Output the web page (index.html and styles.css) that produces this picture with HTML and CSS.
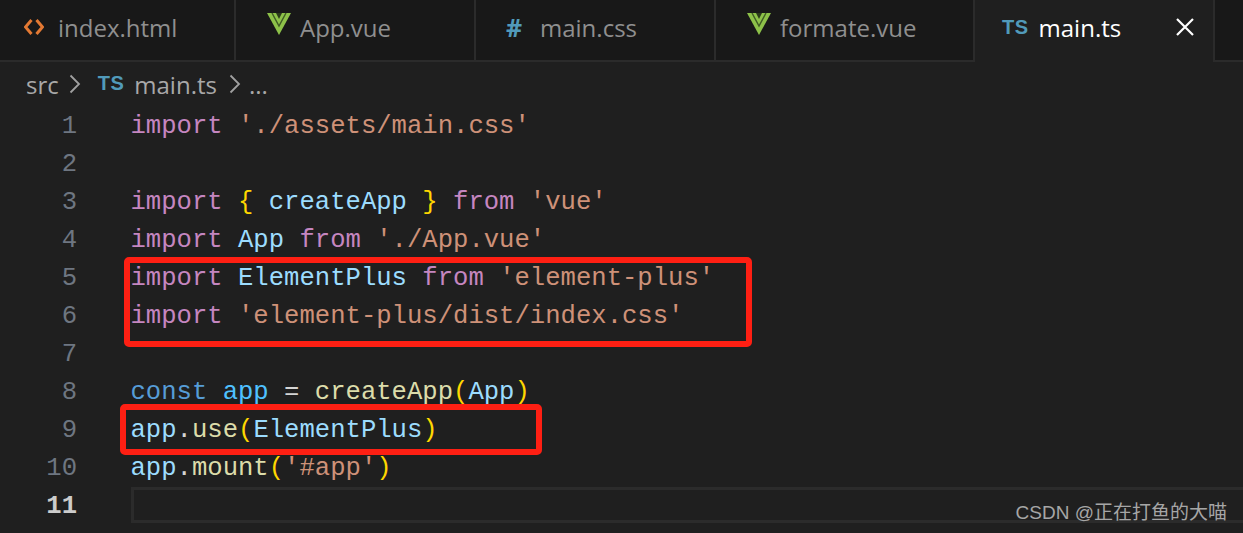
FILE: index.html
```html
<!DOCTYPE html>
<html lang="en">
<head>
<meta charset="utf-8">
<title>main.ts</title>
<link rel="stylesheet" href="styles.css">
</head>
<body>
<div class="window">
  <div class="tabs">
    <div class="tab tab-html">
      <svg class="icon-code" viewBox="0 0 20 20"><path d="M7.500 3 1.500 10l6 7M12.500 3l6 7-6 7" fill="none" stroke="#e37933" stroke-width="3"/></svg>
      <span class="tab-label">index.html</span>
    </div>
    <div class="tab tab-vue">
      <svg class="icon-vue" viewBox="0 0 24 22"><path d="M0 0h24L12 22z" fill="#8dc149"/><path d="M5 0l7 13L19 0" fill="none" stroke="#3f5a24" stroke-width="1.400"/><path d="M9 0h6l-3 6z" fill="#2a3a1a"/></svg>
      <span class="tab-label">App.vue</span>
    </div>
    <div class="tab tab-css">
      <span class="icon-hash">#</span>
      <span class="tab-label">main.css</span>
    </div>
    <div class="tab tab-vue tab-wide">
      <svg class="icon-vue" viewBox="0 0 24 22"><path d="M0 0h24L12 22z" fill="#8dc149"/><path d="M5 0l7 13L19 0" fill="none" stroke="#3f5a24" stroke-width="1.400"/><path d="M9 0h6l-3 6z" fill="#2a3a1a"/></svg>
      <span class="tab-label">formate.vue</span>
    </div>
    <div class="tab tab-active">
      <span class="icon-ts">TS</span>
      <span class="tab-label">main.ts</span>
      <svg class="icon-close" viewBox="0 0 20 20"><path d="M2 2l16 16M18 2 2 18" fill="none" stroke="#fff" stroke-width="2.2"/></svg>
    </div>
    <div class="tabs-rest"></div>
  </div>
  <div class="crumbs">
    <span>src</span>
    <svg class="crumb-sep" viewBox="0 0 12 20"><path d="M1.500 1.500 10 10l-8.500 8.500" fill="none" stroke="#a0a0a0" stroke-width="1.800"/></svg>
    <span class="icon-ts crumb-ts">TS</span>
    <span>main.ts</span>
    <svg class="crumb-sep crumb-sep-last" viewBox="0 0 12 20"><path d="M1.500 1.500 10 10l-8.500 8.500" fill="none" stroke="#a0a0a0" stroke-width="1.800"/></svg>
    <span>...</span>
  </div>
  <div class="code">
    <div class="line"><span class="num">1</span><code><i class="kw">import</i> <i class="str">'./assets/main.css'</i></code></div>
    <div class="line"><span class="num">2</span><code></code></div>
    <div class="line"><span class="num">3</span><code><i class="kw">import</i> <i class="br">{</i> <i class="var">createApp</i> <i class="br">}</i> <i class="kw">from</i> <i class="str">'vue'</i></code></div>
    <div class="line"><span class="num">4</span><code><i class="kw">import</i> <i class="var">App</i> <i class="kw">from</i> <i class="str">'./App.vue'</i></code></div>
    <div class="line"><span class="num">5</span><code><i class="kw">import</i> <i class="var">ElementPlus</i> <i class="kw">from</i> <i class="str">'element-plus'</i></code></div>
    <div class="line"><span class="num">6</span><code><i class="kw">import</i> <i class="str">'element-plus/dist/index.css'</i></code></div>
    <div class="line"><span class="num">7</span><code></code></div>
    <div class="line"><span class="num">8</span><code><i class="decl">const</i> <i class="cst">app</i> <i class="plain">=</i> <i class="fn">createApp</i><i class="br">(</i><i class="var">App</i><i class="br">)</i></code></div>
    <div class="line"><span class="num">9</span><code><i class="var">app</i><i class="plain">.</i><i class="fn">use</i><i class="br">(</i><i class="var">ElementPlus</i><i class="br">)</i></code></div>
    <div class="line"><span class="num">10</span><code><i class="var">app</i><i class="plain">.</i><i class="fn">mount</i><i class="br">(</i><i class="str">'#app'</i><i class="br">)</i></code></div>
    <div class="line line-current"><span class="num">11</span><code></code></div>
  </div>
  <div class="mark mark-imports"></div>
  <div class="mark mark-use"></div>
  <div class="watermark">CSDN @正在打鱼的大喵</div>
</div>
</body>
</html>
```
FILE: styles.css
```css
html, body {
  margin: 0;
  padding: 0;
  background: #1f1f1f;
}
.window {
  position: relative;
  width: 1243px;
  height: 533px;
  overflow: hidden;
  background: #1f1f1f;
  font-family: "Open Sans", "Noto Sans", sans-serif;
}
.tabs {
  display: flex;
  height: 62px;
  box-sizing: border-box;
}
.tab {
  display: flex;
  align-items: center;
  width: 240px;
  box-sizing: border-box;
  height: 62px;
  background: #181818;
  border-right: 2px solid #2b2b2b;
  border-bottom: 2px solid #2b2b2b;
  font-size: 24px;
  color: #8f8f8f;
  padding-bottom: 6px;
}
.tab-html {
  width: 236px;
  padding-left: 24px;
  gap: 14px;
}
.tab-vue {
  padding-left: 31px;
  gap: 9px;
}
.tab-css {
  padding-left: 30px;
  gap: 15px;
}
.tab-wide {
  width: 259px;
}
.tab-active {
  width: 240px;
  background: #1f1f1f;
  border-bottom: 0;
  padding-left: 27px;
  padding-bottom: 8px;
  gap: 10px;
  color: #ffffff;
}
.tabs-rest {
  flex: 1;
  background: #181818;
  border-bottom: 2px solid #2b2b2b;
}
.icon-code {
  width: 20px;
  height: 20px;
}
.icon-vue {
  width: 24px;
  height: 22px;
  margin-bottom: 6px;
}
.icon-hash {
  color: #519aba;
  font-size: 25px;
  font-weight: 700;
  width: 19px;
  line-height: 1;
}
.icon-ts {
  color: #519aba;
  font-family: "Liberation Sans", sans-serif;
  font-size: 20px;
  font-weight: 700;
  letter-spacing: 0.5px;
  line-height: 1;
}
.icon-close {
  width: 20px;
  height: 20px;
  margin-left: auto;
  margin-right: 18px;
}
.crumbs {
  display: flex;
  align-items: center;
  gap: 10px;
  height: 44px;
  padding-left: 26px;
  font-size: 24px;
  color: #a8a8a8;
}
.crumb-sep {
  width: 12px;
  height: 20px;
}
.crumb-ts {
  margin: 0 0 2px 7px;
}
.crumb-sep-last {
  margin: 0 -2px 0 2px;
}
.code {
  display: flex;
  flex-direction: column;
  font-family: "Liberation Mono", monospace;
  font-size: 25.600px;
}
.line {
  display: flex;
  height: 38px;
  line-height: 42px;
  align-items: stretch;
}
.num {
  width: 77px;
  flex: none;
  text-align: right;
  color: #6e7681;
}
code {
  display: block;
  flex: 1;
  margin-left: 53.500px;
  font: inherit;
  white-space: pre;
}
code i {
  font-style: normal;
}
.line-current .num {
  color: #cccccc;
  font-weight: 700;
}
.line-current code {
  border: 3px solid #2b2b2b;
  border-right: 0;
  height: 36px;
  margin-top: 1px;
  box-sizing: border-box;
}
.kw { color: #c586c0; }
.str { color: #ce9178; }
.var { color: #9cdcfe; }
.cst { color: #4fc1ff; }
.decl { color: #569cd6; }
.fn { color: #dcdcaa; }
.br { color: #ffd700; }
.plain { color: #d4d4d4; }
.mark {
  position: absolute;
  box-sizing: border-box;
  border: 6px solid #fe1f13;
  border-radius: 5px;
}
.mark-imports {
  left: 124px;
  top: 257px;
  width: 628px;
  height: 90px;
}
.mark-use {
  left: 120px;
  top: 404px;
  width: 422px;
  height: 51px;
}
.watermark {
  position: absolute;
  right: 16px;
  top: 501px;
  font-family: "Liberation Sans", "Noto Sans CJK SC", sans-serif;
  font-size: 19px;
  color: #a6a6a6;
  line-height: 24px;
}
```
